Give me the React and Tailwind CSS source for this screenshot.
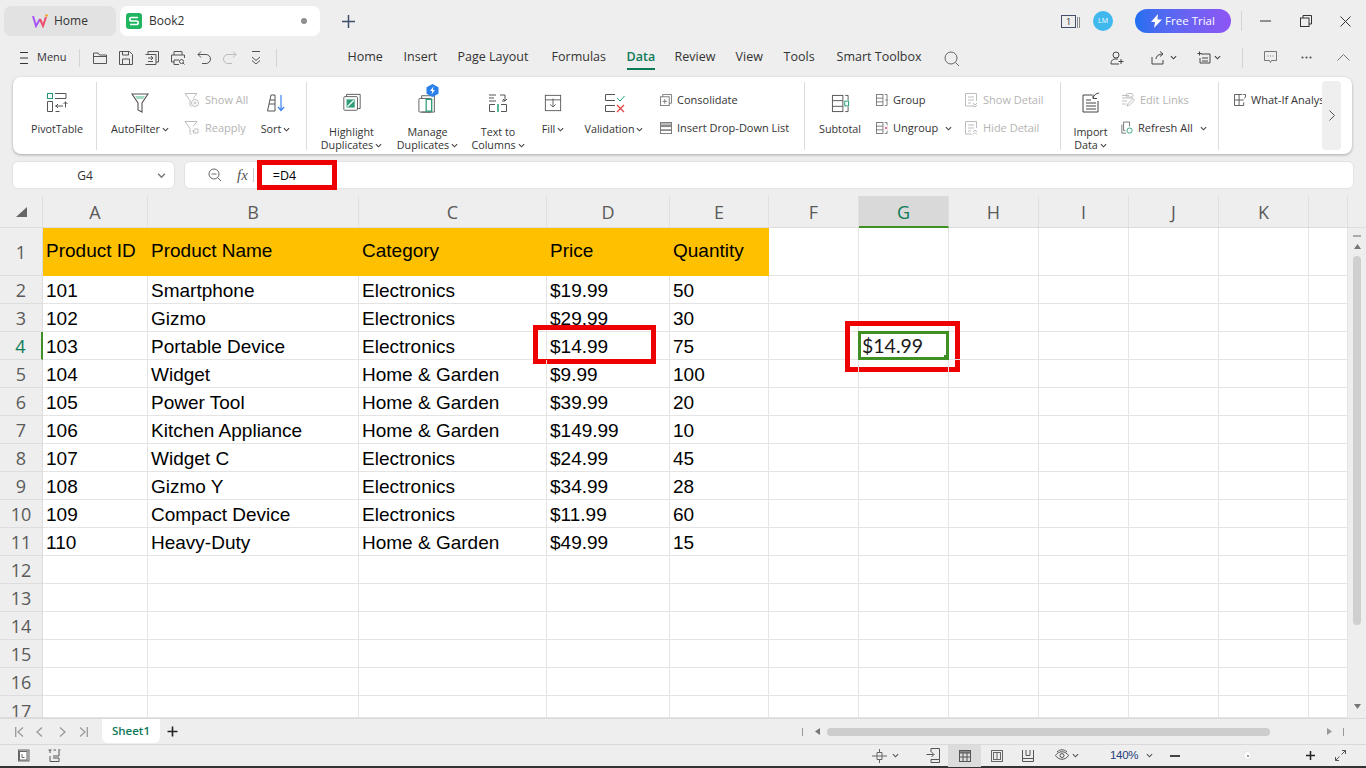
import React from "react";

const ui = { fontFamily: '"Open Sans", "Noto Sans", sans-serif' };

const S = ({ w = 20, h = 20, vb = "0 0 20 20", c = "#555", sw = 1, children, className = "" }) => (
  <svg width={w} height={h} viewBox={vb} fill="none" stroke={c} strokeWidth={sw} className={"shrink-0 " + className}>
    {children}
  </svg>
);

const Chev = ({ c = "#444", size = 7 }) => (
  <svg width={size} height={size} viewBox="0 0 8 8" fill="none" stroke={c} strokeWidth="1.3" className="shrink-0">
    <path d="M1 2.5 4 5.5 7 2.5" />
  </svg>
);

const I = {
  pivot: (
    <S w={22} h={22} vb="0 0 22 22">
      <rect x="1.5" y="1.5" width="5" height="5" stroke="#1f9d6c" />
      <path d="M9 1.5h11v5H9M1.5 9.5h5v10h-5zM9.5 19.5h4M19.5 9.5v6M19.5 10l-2 2M19.5 10l2 2M9 14h8M10 14l2-2M10 14l2 2" />
    </S>
  ),
  filter: (
    <S w={20} h={22} vb="0 0 20 22" sw={1.1}>
      <path d="M2 2h16l-6 9v9l-4-2v-7z" />
      <path d="M5 4h10l-2 3H7z" fill="#9fd9c2" stroke="none" />
    </S>
  ),
  showAll: (
    <S w={16} h={16} vb="0 0 16 16" c="#bdbdbd">
      <path d="M1 1.5h12l-4 5M1 1.5l5 7v5l1.5 1" />
      <circle cx="11" cy="11" r="3.5" />
      <circle cx="11" cy="11" r="1" />
    </S>
  ),
  reapply: (
    <S w={16} h={16} vb="0 0 16 16" c="#bdbdbd">
      <path d="M1 1.5h12l-4 5M1 1.5l5 7v5l1.5 1" />
      <path d="M10 9h4v4M14 13H9.5v-3M9.5 10l-1.5 1.5M9.5 10l1.5 1.5" />
    </S>
  ),
  sort: (
    <S w={20} h={22} vb="0 0 20 22">
      <path d="M5 3h4v16H1.5zM3 12h6M9 8H4" />
      <path d="M15 3v15M12 15l3 3.5 3-3.5" stroke="#3b82f6" strokeWidth="1.2" />
    </S>
  ),
  highlight: (
    <S w={20} h={20} vb="0 0 22 22">
      <path d="M5 4V1.5h15V17h-3" />
      <rect x="2" y="4" width="15" height="15" rx="1" />
      <rect x="5" y="7" width="9" height="9" fill="#2f9e78" stroke="none" />
      <path d="M6 15l7-7" stroke="#fff" strokeWidth="1.5" />
    </S>
  ),
  manage: (
    <div className="relative w-[20px] h-[20px]">
      <S w={20} h={20} vb="0 0 22 22">
        <rect x="1" y="6" width="14" height="15" rx="1" />
        <path d="M4 6V3h14v18H4" />
        <path d="M9 7h6v13H9z" stroke="#2f9e78" strokeWidth="1.4" />
      </S>
      <svg width="13" height="13" viewBox="0 0 13 13" className="absolute -top-[9px] left-[8px]">
        <path d="M6.5 0 12.5 3.2v6.6L6.5 13 .5 9.8V3.2z" fill="#2b7fe8" />
        <path d="M7.5 2.5 4 7h2.3L5.5 10.5 9 6H6.8z" fill="#fff" />
      </svg>
    </div>
  ),
  text: (
    <S w={20} h={20} vb="0 0 20 20">
      <path d="M1 2h7M1 5h5M1 8h7M12 2h5v6M14 8h3M15 6l2 2 2-2" />
      <path d="M7 11.5H1.5v7H7M13 11.5h5.5v7H13" />
      <path d="M10 11v8" stroke="#1f9d6c" strokeWidth="1.5" />
    </S>
  ),
  fill: (
    <S w={18} h={18} vb="0 0 20 20">
      <rect x="1.5" y="1.5" width="17" height="17" />
      <path d="M1.5 6.5h17M10 5v9M7 11.5l3 3 3-3" />
    </S>
  ),
  valid: (
    <S w={21} h={20} vb="0 0 21 20">
      <path d="M11 1.5H1.5v6H11M11 12.5H1.5v6H11" />
      <path d="M13 5l3 3 4.5-5" stroke="#1f9d6c" />
      <path d="M13 12l7 7M20 12l-7 7" stroke="#e23b3b" strokeWidth="1.1" />
    </S>
  ),
  consol: (
    <S w={12} h={12} vb="0 0 13 13" c="#777">
      <path d="M3 3V.5h9.5V10H10" />
      <rect x=".5" y="3" width="9.5" height="9.5" />
      <path d="M5.2 5.5v5M2.7 8h5" />
    </S>
  ),
  drop: (
    <S w={12} h={12} vb="0 0 13 13" c="#777">
      <rect x=".5" y=".5" width="12" height="3.5" fill="#bbb" />
      <rect x=".5" y="5" width="12" height="3.5" />
      <rect x=".5" y="9" width="12" height="3.5" />
    </S>
  ),
  subtotal: (
    <S w={19} h={19} vb="0 0 20 20">
      <rect x="1.5" y="1.5" width="11" height="17" />
      <path d="M1.5 7h11M1.5 13h11M15 1.5h3v5M15 18.5h3v-5" />
      <rect x="14.5" y="7.5" width="4" height="5" stroke="#1f9d6c" />
    </S>
  ),
  group: (
    <S w={12} h={12} vb="0 0 13 13" c="#777">
      <rect x=".5" y=".5" width="7" height="12" />
      <path d="M.5 4.5h7M.5 8.5h7M9.5 .5h2.5v12H9.5M10 6.5h2.5" />
    </S>
  ),
  ungroup: (
    <S w={12} h={12} vb="0 0 13 13" c="#777">
      <rect x=".5" y=".5" width="7" height="12" />
      <path d="M.5 4.5h7M.5 8.5h7M9.5 .5h2.5v3M9.5 12.5h2.5v-3" />
      <path d="M9.5 5l3 3M12.5 5l-3 3" stroke="#e0567a" />
    </S>
  ),
  showD: (
    <S w={13} h={14} vb="0 0 13 14" c="#bdbdbd">
      <path d="M9 13H.5V.5h11V8M3 4h6M3 7h6M3 10h3M8 10l2 2 2-2M8 12l2 2 2-2" />
    </S>
  ),
  hideD: (
    <S w={13} h={14} vb="0 0 13 14" c="#bdbdbd">
      <path d="M7 13H.5V.5h11V7M3 4h6M3 7h6M3 10h3M8 11l2-2 2 2M8 13.5l2-2 2 2" />
    </S>
  ),
  imp: (
    <S w={20} h={22} vb="0 0 20 22" c="#444">
      <path d="M11 3H2v17h15V9M5 8h5M5 11h10M5 14h10M5 17h10" />
      <path d="M18 1c-3 .5-5 2-6 5M12 2.5V6.5h4" />
    </S>
  ),
  edit: (
    <S w={14} h={14} vb="0 0 14 14" c="#bdbdbd">
      <path d="M1 2.5h7M1 5h11M1 8h5M1 11h4M6 13l1-2.5 5-5 1.5 1.5-5 5z" />
      <rect x="5" y=".5" width="7" height="3.5" rx="1.7" />
    </S>
  ),
  refresh: (
    <S w={12} h={14} vb="0 0 14 16" c="#666">
      <path d="M3 1h7v5M3 1v10h2M1 4v10h5" />
      <circle cx="10" cy="11" r="3" stroke="#1f9d6c" />
    </S>
  ),
  whatif: (
    <S w={12} h={12} vb="0 0 13 13" c="#555">
      <path d="M9 .5H.5v12h10V9M.5 6.5h10M5.5 .5v12M10 .5h2.5v3l-1.5 1" />
    </S>
  ),
};

const Big = ({ w, icon, lines, chev }) => (
  <div style={{ width: w }} className="flex flex-col items-center shrink-0">
    <div className="h-[22px] flex items-center justify-center mt-[15px]">{icon}</div>
    {lines.length === 1 ? (
      <div className="mt-[9px] flex items-center gap-[2px] text-[10.75px] leading-[13px] text-[#333] whitespace-nowrap">
        {lines[0]}
        {chev && <Chev />}
      </div>
    ) : (
      <div className="mt-[12px] flex flex-col items-center text-[10.75px] leading-[13px] text-[#333] whitespace-nowrap">
        <span>{lines[0]}</span>
        <span className="flex items-center gap-[2px]">
          {lines[1]}
          {chev && <Chev />}
        </span>
      </div>
    )}
  </div>
);

const Small = ({ icon, label, dis, chev }) => (
  <div className={"flex items-center gap-[5px] h-[16px] text-[11px] whitespace-nowrap " + (dis ? "text-[#b4b4b4]" : "text-[#333]")}>
    {icon}
    {label}
    {chev && <span className="ml-[2px]"><Chev /></span>}
  </div>
);

const Col = ({ w, children }) => (
  <div style={{ width: w }} className="flex flex-col gap-[12px] pt-[15px] pl-[1px] shrink-0">
    {children}
  </div>
);

const Sep = () => <div className="w-px h-[68px] bg-[#dcdcdc] self-center shrink-0" />;

const letters = ["A", "B", "C", "D", "E", "F", "G", "H", "I", "J", "K", ""];
const data = [
  ["Product ID", "Product Name", "Category", "Price", "Quantity"],
  ["101", "Smartphone", "Electronics", "$19.99", "50"],
  ["102", "Gizmo", "Electronics", "$29.99", "30"],
  ["103", "Portable Device", "Electronics", "$14.99", "75"],
  ["104", "Widget", "Home & Garden", "$9.99", "100"],
  ["105", "Power Tool", "Home & Garden", "$39.99", "20"],
  ["106", "Kitchen Appliance", "Home & Garden", "$149.99", "10"],
  ["107", "Widget C", "Electronics", "$24.99", "45"],
  ["108", "Gizmo Y", "Electronics", "$34.99", "28"],
  ["109", "Compact Device", "Electronics", "$11.99", "60"],
  ["110", "Heavy-Duty", "Home & Garden", "$49.99", "15"],
];
const rows = Array.from({ length: 17 }, (_, i) => i + 1);
const rowH = (r) => (r === 1 ? 48 : r === 17 ? 22 : 28);

function Sheet() {
  return (
    <div className="grid grid-cols-[43px_105px_211px_188px_123px_99px_90px_90px_90px_90px_90px_90px_39px] bg-white overflow-hidden h-[522px]">
      <div className="h-[32px] bg-[#eeeeee] border-b border-r border-[#dddddd] flex items-center justify-center">
        <svg width="11" height="10" viewBox="0 0 11 10"><path d="M11 0v10H0z" fill="#666" /></svg>
      </div>
      {letters.map((l) => (
        <div
          key={l || "x"}
          style={ui}
          className={
            "h-[32px] pt-[2px] flex items-center justify-center text-[18px] border-r border-[#e0e0e0] " +
            (l === "G" ? "bg-[#d9d9d9] text-[#0d7a57] border-b-2 border-b-[#3f8f22]" : "bg-[#eeeeee] text-[#5a5a5a] border-b border-b-[#dddddd]")
          }
        >
          {l}
        </div>
      ))}
      {rows.map((r) => (
        <React.Fragment key={r}>
          <div
            style={{ ...ui, height: rowH(r) }}
            className={
              "bg-[#eeeeee] flex justify-center text-[18px] overflow-hidden border-r border-b border-[#dddddd] " +
              (r === 17 ? "items-start pt-[2px] " : "items-center pt-[2px] ") +
              (r === 4 ? "text-[#0d7a57] border-r-2 border-r-[#3f8f22]" : "text-[#5a5a5a]")
            }
          >
            {r}
          </div>
          {letters.map((l, c) => {
            const v = data[r - 1] && data[r - 1][c];
            const head = r === 1 && c < 5;
            return (
              <div
                key={c}
                style={{ height: rowH(r) }}
                className={
                  "relative flex items-center pl-[3px] pr-0 whitespace-nowrap text-[19px] text-black border-b border-r " +
                  (head ? "bg-[#ffc000] border-[#ffc000]" : "border-[#e4e4e4]")
                }
              >
                <span className={r === 1 ? "" : "pt-[4px]"}>{v}</span>
                {r === 4 && l === "G" && (
                  <div className="absolute -left-px -top-px w-[91px] h-[29px] border-[3px] border-[#3f8f22] flex items-center pl-[1px] font-['Lato'] text-[#1a1a1a] text-[19.5px]">
                    $14.99
                    <span className="absolute -right-[3px] -bottom-[3px] w-[5px] h-[5px] bg-[#3f8f22]" />
                  </div>
                )}
                {r === 4 && l === "G" && (
                  <div className="absolute left-[-14px] top-[-11px] w-[115px] h-[51px] border-[5px] border-[#ee0000] pointer-events-none" />
                )}
                {r === 4 && l === "D" && (
                  <div className="absolute left-[-14px] top-[-7px] w-[123px] h-[39px] border-[5px] border-[#ee0000] pointer-events-none" />
                )}
              </div>
            );
          })}
        </React.Fragment>
      ))}
    </div>
  );
}

const Tabs = [
  ["Home", 56],
  ["Insert", 54],
  ["Page Layout", 94],
  ["Formulas", 75],
  ["Data", 48],
  ["Review", 61],
  ["View", 48],
  ["Tools", 53],
  ["Smart Toolbox", 105],
];

export default function App() {
  return (
    <div style={ui} className="relative w-[1366px] h-[768px] overflow-hidden bg-[#eeeeee] text-[#333]">
      {/* title bar */}
      <div className="h-[42px] flex items-start pt-[6px] pl-[4px]">
        <div className="w-[112px] h-[30px] rounded-[7px] bg-[#e2e2e2] flex items-center pl-[28px] gap-[6px] text-[12px] text-[#333]">
          <svg width="16" height="14" viewBox="0 0 16 14" fill="none" strokeWidth="2">
            <path d="M1 2l3 10 4-7" stroke="#a855f7" />
            <path d="M8 5l3 7 3-9" stroke="#ef4e6d" />
            <circle cx="14.5" cy="1.5" r="1.2" fill="#f59e0b" stroke="none" />
          </svg>
          Home
        </div>
        <div className="ml-[4px] w-[200px] h-[30px] rounded-[7px] bg-white flex items-center pl-[6px] pr-[13px] text-[12px]">
          <svg width="16" height="16" viewBox="0 0 16 16" fill="none">
            <rect width="16" height="16" rx="3" fill="#1fb561" />
            <path d="M12 4.5H5.5a1.7 1.7 0 0 0 0 3.5h5a1.7 1.7 0 0 1 0 3.5H4" stroke="#fff" strokeWidth="1.6" />
          </svg>
          <span className="ml-[7px]">Book2</span>
          <span className="ml-auto w-[6px] h-[6px] rounded-full bg-[#8f8f8f]" />
        </div>
        <svg className="ml-[22px] mt-[9px]" width="13" height="13" viewBox="0 0 13 13" stroke="#3f4e6b" strokeWidth="1.5">
          <path d="M6.5 0v13M0 6.5h13" />
        </svg>
        <div className="ml-auto flex items-center h-[30px]">
          <div className="flex items-center gap-[1px]">
            <div className="w-[15px] h-[13px] border border-[#44506a] text-[9px] leading-[11px] text-center">1</div>
            <div className="w-[3px] h-[11px] border-x border-[#8a8a8a] self-end" />
          </div>
          <div className="ml-[13px] w-[20px] h-[20px] rounded-full bg-[#3fb8ee] text-white text-[7px] flex items-center justify-center">LM</div>
          <div className="ml-[22px] w-[96px] h-[24px] rounded-full bg-gradient-to-r from-[#1f6ff0] to-[#8d55f5] text-white text-[11.5px] flex items-center justify-center gap-[3px]">
            <svg width="11" height="14" viewBox="0 0 11 14"><path d="M7 0 0 8h4l-1 6 8-8.500H6.500z" fill="#fff" /></svg>
            Free Trial
          </div>
          <div className="ml-[10px] w-px h-[20px] bg-[#d4d4d4]" />
          <svg className="ml-[18px]" width="11" height="2" viewBox="0 0 11 2" stroke="#333"><path d="M0 1h11" /></svg>
          <svg className="ml-[29px]" width="12" height="12" viewBox="0 0 12 12" fill="none" stroke="#333"><rect x=".5" y="3" width="8.5" height="8.5" /><path d="M3 3V.5h8.500V9H9" /></svg>
          <svg className="ml-[28px] mr-[15px]" width="11" height="11" viewBox="0 0 11 11" stroke="#333"><path d="M.5.5l10 10M10.500.5l-10 10" /></svg>
        </div>
      </div>

      {/* menu row */}
      <div className="h-[35px] pb-[4px] flex items-center text-[12.5px] relative">
        <div className="ml-[20px] flex items-center gap-[9px] text-[11px]">
          <svg width="8" height="12" viewBox="0 0 8 12" stroke="#333"><path d="M0 .5h8M0 6h8M0 11.500h8" /></svg>
          Menu
        </div>
        <div className="ml-[12px] w-px h-[18px] bg-[#d4d4d4]" />
        <div className="ml-[13px] flex items-center gap-[12px]">
          <S w={14} h={14} vb="0 0 14 14"><path d="M.5 12.5V2h4.500l1.500 2h7v8.500zM.5 5.500h13" /></S>
          <S w={14} h={14} vb="0 0 14 14"><path d="M.5.5h10l3 3v10H.5zM3.500.5v3.500h6V.5M3.500 13.500V8h7v5.500" /></S>
          <S w={14} h={14} vb="0 0 14 14"><path d="M3 3.500V.5h10.500V11H11M.5 3.500h10.500V13.500H.5M3 7h5l-2-2M8 7l-2 2M3 10.500h5" /></S>
          <S w={14} h={14} vb="0 0 14 14"><path d="M3 4V.5h8V4M.5 11V4h13v3M3 11H.5M8 9h-5v4.500h5" /><circle cx="10.5" cy="10.5" r="2" /><path d="M12 12l1.500 1.500" /></S>
          <S w={14} h={14} vb="0 0 14 14"><path d="M4 .5 1 3.500l3 3M1 3.500h8a4 4 0 0 1 0 9H5" /></S>
          <S w={14} h={14} vb="0 0 14 14" c="#bbb"><path d="M10 .5l3 3-3 3M13 3.500H5a4 4 0 0 0 0 9h4" /></S>
          <S w={14} h={14} vb="0 0 14 14"><path d="M3 .5h8M3 6l4 3.500L11 6M3 9.500l4 3.500 4-3.500" /></S>
        </div>
        <div className="ml-[13px] w-px h-[18px] bg-[#d4d4d4]" />
        <div className="ml-[71px] flex items-center h-full">
          {Tabs.map(([t, w]) => (
            <div key={t} style={{ width: w }} className="relative h-full flex items-center whitespace-nowrap">
              {t === "Data" ? (
                <span className="relative font-semibold text-[#0d7a57]">
                  {t}
                  <span className="absolute left-0 right-0 top-[20px] h-[2px] bg-[#0d7a57]" />
                </span>
              ) : (
                t
              )}
            </div>
          ))}
        </div>
        <svg className="ml-[2px] mt-[2px]" width="16" height="16" viewBox="0 0 16 16" fill="none" stroke="#666"><circle cx="7" cy="7" r="6" /><path d="M11.500 11.500 15 15" /></svg>
        <div className="ml-auto flex items-center mr-[16px]">
          <S w={14} h={14} vb="0 0 14 14" c="#444"><circle cx="6" cy="4" r="3" /><path d="M1 13c0-4 2-5 5-5h2M1 13h8M11 8v5M8.500 10.500h5" /></S>
          <S w={16} h={14} vb="0 0 16 14" c="#444" className="ml-[27px]"><path d="M1 6v7h11V9M5 8c0-3 3-5 7-5M9 .5l3 2.500-3 2.500" /></S>
          <span className="ml-[3px]"><Chev /></span>
          <S w={14} h={14} vb="0 0 14 14" c="#444" className="ml-[20px]"><path d="M4 3h9v9H3V7M5 7h6M5 10h6M2.500.5v4M.5 2.500h4" /></S>
          <span className="ml-[3px]"><Chev /></span>
          <div className="ml-[21px] w-px h-[20px] bg-[#d4d4d4]" />
          <S w={13} h={13} vb="0 0 13 13" c="#777" className="ml-[21px]"><path d="M.5.5h12v9H7.500l-1 2-1-2h-5zM3.500 5h1M6 5h1M8.500 5h1" /></S>
          <svg className="ml-[24px]" width="11" height="3" viewBox="0 0 11 3" fill="#555"><circle cx="1.5" cy="1.5" r="1.1" /><circle cx="5.5" cy="1.5" r="1.1" /><circle cx="9.5" cy="1.5" r="1.1" /></svg>
          <svg className="ml-[25px]" width="13" height="7" viewBox="0 0 13 7" fill="none" stroke="#777"><path d="M.5 6.500 6.500.5l6 6" /></svg>
        </div>
      </div>

      {/* ribbon */}
      <div className="ml-[13px] w-[1339px] h-[77px] bg-white rounded-[8px] shadow-[0_1px_3px_rgba(0,0,0,0.3)] flex items-stretch relative overflow-hidden">
        <Big w={88} icon={I.pivot} lines={["PivotTable"]} />
        <div className="-ml-[5px]"><div className="h-full flex items-center"><Sep /></div></div>
        <Big w={86} icon={I.filter} lines={["AutoFilter"]} chev />
        <Col w={62}>
          <Small icon={I.showAll} label="Show All" dis />
          <Small icon={I.reapply} label="Reapply" dis />
        </Col>
        <Big w={61} icon={I.sort} lines={["Sort"]} chev />
        <Sep />
        <Big w={89} icon={I.highlight} lines={["Highlight", "Duplicates"]} chev />
        <Big w={63} icon={I.manage} lines={["Manage", "Duplicates"]} chev />
        <Big w={78} icon={I.text} lines={["Text to", "Columns"]} chev />
        <Big w={32} icon={I.fill} lines={["Fill"]} chev />
        <Big w={90} icon={I.valid} lines={["Validation"]} chev />
        <Col w={145}>
          <Small icon={I.consol} label="Consolidate" />
          <Small icon={I.drop} label="Insert Drop-Down List" />
        </Col>
        <Sep />
        <Big w={70} icon={I.subtotal} lines={["Subtotal"]} />
        <Col w={89}>
          <Small icon={I.group} label="Group" />
          <Small icon={I.ungroup} label="Ungroup" chev />
        </Col>
        <Col w={96}>
          <Small icon={I.showD} label="Show Detail" dis />
          <Small icon={I.hideD} label="Hide Detail" dis />
        </Col>
        <Sep />
        <Big w={59} icon={I.imp} lines={["Import", "Data"]} chev />
        <Col w={98}>
          <Small icon={I.edit} label="Edit Links" dis />
          <Small icon={I.refresh} label="Refresh All" chev />
        </Col>
        <Sep />
        <div className="w-[103px] pl-[15px] pt-[15px] overflow-hidden shrink-0">
          <Small icon={I.whatif} label="What-If Analysis" />
        </div>
        <div className="w-[19px] h-[69px] mt-[4px] bg-[#efefef] rounded-[4px] flex items-center justify-center shrink-0">
          <svg width="6" height="11" viewBox="0 0 6 11" fill="none" stroke="#555"><path d="M.5.5l5 5-5 5" /></svg>
        </div>
      </div>

      {/* formula bar */}
      <div className="h-[42px] flex items-center pl-[12px] gap-[9px]">
        <div className="w-[163px] h-[28px] bg-white rounded-[6px] border border-[#e2e2e2] flex items-center relative text-[12px] text-[#333]">
          <span className="w-[144px] pt-[2px] text-center">G4</span>
          <Chev c="#777" size={9} />
        </div>
        <div className="w-[1170px] h-[28px] bg-white rounded-[6px] border border-[#e2e2e2] flex items-center relative text-[12.5px] text-black">
          <S w={14} h={14} vb="0 0 14 14" c="#666" className="ml-[23px]"><circle cx="6" cy="6" r="5" /><path d="M9.500 9.500 13 13M3.500 6h5" /></S>
          <span className="ml-[15px] italic text-[#555] text-[15px] font-['Liberation_Serif']">fx</span>
          <span className="ml-[5px] w-px h-[14px] bg-[#ccc]" />
          <span className="ml-[19px] pt-[2px] whitespace-nowrap">=D4</span>
          <div className="absolute left-[72px] top-[-2px] w-[80px] h-[30px] border-[5px] border-[#ee0000] pointer-events-none" />
        </div>
      </div>

      {/* sheet */}
      <div className="flex h-[522px] font-['Liberation_Sans']">
        <div className="w-[1348px] overflow-hidden">
          <Sheet />
        </div>
        <div className="w-[18px] bg-[#eeeeee] flex flex-col items-center">
          <div className="h-[32px] w-full border-b border-[#dddddd]" />
          <div className="mt-[7px] w-[8px] h-[2px] bg-[#aaaaaa]" />
          <svg className="mt-[7px]" width="7" height="5" viewBox="0 0 7 5"><path d="M3.500 0 7 5H0z" fill="#777" /></svg>
          <div className="mt-[7px] w-[8px] h-[369px] rounded-full bg-[#cfcfcf]" />
          <svg className="mt-auto mb-[9px]" width="7" height="5" viewBox="0 0 7 5"><path d="M3.500 5 7 0H0z" fill="#777" /></svg>
        </div>
      </div>

      {/* sheet tabs */}
      <div className="h-[26px] border-t border-[#d9d9d9] flex items-center relative">
        <div className="ml-[15px] flex items-center">
          <S w={9} h={10} vb="0 0 9 10" c="#9a9a9a" sw={1.3}><path d="M.7 0v10M8 .5 3 5l5 4.500" /></S>
          <S w={7} h={10} vb="0 0 7 10" c="#9a9a9a" sw={1.3} className="ml-[12px]"><path d="M6 .5 1 5l5 4.500" /></S>
          <S w={7} h={10} vb="0 0 7 10" c="#9a9a9a" sw={1.3} className="ml-[16px]"><path d="M1 .5 6 5l-5 4.500" /></S>
          <S w={9} h={10} vb="0 0 9 10" c="#9a9a9a" sw={1.3} className="ml-[13px]"><path d="M1 .5 6 5l-5 4.500M8.300 0v10" /></S>
        </div>
        <div className="ml-[14px] w-[58px] h-[24px] self-start bg-white rounded-b-[6px] flex items-center justify-center text-[11.5px] font-semibold text-[#0d7a57]">Sheet1</div>
        <svg className="ml-[7px]" width="11" height="11" viewBox="0 0 11 11" stroke="#222" strokeWidth="1.6"><path d="M5.500.5v10M.5 5.500h10" /></svg>
        <div className="ml-[624px] w-px h-[8px] bg-[#999]" />
        <svg className="ml-[12px]" width="5" height="7" viewBox="0 0 5 7"><path d="M0 3.500 5 0v7z" fill="#777" /></svg>
        <div className="ml-[7px] w-[443px] h-[8px] rounded-full bg-[#cdcdcd]" />
        <svg className="ml-[57px]" width="5" height="7" viewBox="0 0 5 7"><path d="M5 3.500 0 0v7z" fill="#999" /></svg>
        <div className="ml-[11px] w-px h-[8px] bg-[#999]" />
      </div>

      {/* status bar */}
      <div className="h-[22px] border-t border-[#d9d9d9] flex items-center relative">
        <S w={12} h={13} vb="0 0 12 13" c="#666" className="ml-[18px]"><rect x=".5" y="1" width="10.5" height="11" fill="#ddd" /><rect x="1.5" y="2.5" width="7.5" height="8.5" fill="#fff" /><path d="M4 5v3.500h2.500" /></S>
        <S w={13} h={13} vb="0 0 13 13" c="#555" className="ml-[18px]"><path d="M.5 1h3M5.500 1h2.500M10 1h2.500M2 4V1M5 7h6V2M2 7v5.500h9V9H5" /></S>
        <S w={15} h={14} vb="0 0 15 14" c="#666" className="ml-[811px]"><path d="M5 3.500h5v7H5zM5 7h5M7.500 0v3.500M7.500 10.500V14M0 7h5M10 7h5" /></S>
        <span className="ml-[5px]"><Chev c="#555" /></span>
        <S w={14} h={15} vb="0 0 14 15" c="#555" className="ml-[27px]"><path d="M5 4V.5h8.500v11M5 11.500v3h8.500v-3zM.5 6.500h7M5.500 4 8 6.500 5.500 9" /></S>
        <div className="ml-[8px] w-[33px] h-[22px] bg-[#dcdcdc] flex items-center justify-center">
          <S w={12} h={12} vb="0 0 12 12" c="#555"><rect x=".5" y=".5" width="11" height="11" /><rect x=".5" y=".5" width="11" height="2.500" fill="#888" /><path d="M4 3v8.500M8 3v8.500M.5 7h11" /></S>
        </div>
        <S w={12} h={12} vb="0 0 12 12" c="#666" className="ml-[10px]"><rect x=".5" y=".5" width="11" height="11" /><rect x="2.5" y="2.5" width="7" height="7" /><path d="M6 2.500v7" /></S>
        <S w={12} h={12} vb="0 0 12 12" c="#555" className="ml-[19px]"><path d="M.5 0v11.500h11V0M.5 8.500h11M4 0v5.500h4V0" /></S>
        <S w={14} h={13} vb="0 0 14 13" c="#555" className="ml-[21px]"><path d="M.5 6.500c3-5 10-5 13 0-3 5-10 5-13 0zM2 3c3-3 7-3 10 0" /><circle cx="7" cy="6.5" r="2" /></S>
        <span className="ml-[3px]"><Chev c="#555" /></span>
        <span className="ml-[31px] text-[11.5px] text-[#24407a] font-['Liberation_Sans'] tracking-[-0.3px]">140%</span>
        <span className="ml-[8px]"><Chev c="#555" /></span>
        <div className="ml-[17px] w-[10px] h-[2px] bg-[#444]" />
        <div className="ml-[63px] w-[9px] h-[9px] rounded-full bg-white border border-[#e3e3e3] flex items-center justify-center"><span className="w-[2px] h-[2px] rounded-full bg-[#777]" /></div>
        <svg className="ml-[54px]" width="9" height="9" viewBox="0 0 9 9" stroke="#222" strokeWidth="1.5"><path d="M4.500 0v9M0 4.500h9" /></svg>
        <S w={11} h={11} vb="0 0 11 11" c="#555" className="ml-[20px]"><path d="M7 .5h3.500V4M10.500.5 6.500 4.500M4 10.500H.5V7M.5 10.500l4-4" /></S>
      </div>
      <div className="h-[2px] bg-[#333]" />
    </div>
  );
}
